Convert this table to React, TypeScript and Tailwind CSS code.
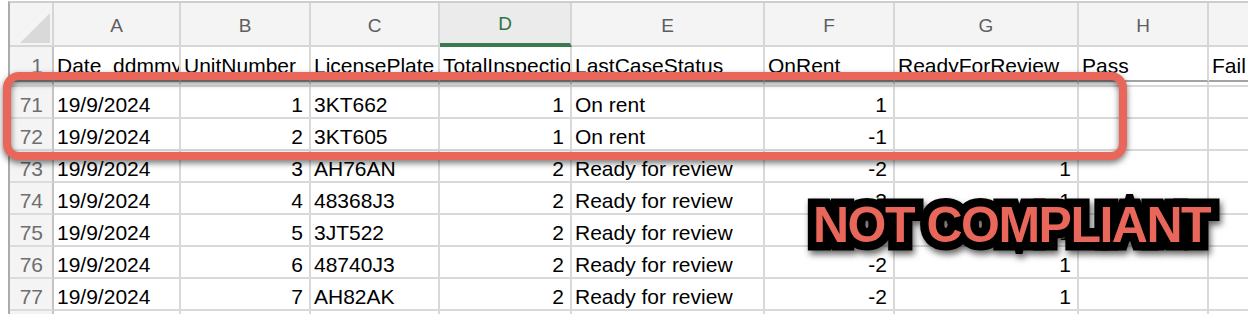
import React from 'react';

const cols = ['w-[127px]', 'w-[130px]', 'w-[129px]', 'w-[132px]', 'w-[193px]', 'w-[130px]', 'w-[184px]', 'w-[130px]', 'w-[160px]'];
const letters = ['A', 'B', 'C', 'D', 'E', 'F', 'G', 'H', ''];
const numeric = [false, true, false, true, false, true, true, true, true];

const header = ['Date_ddmmyyyy', 'UnitNumber', 'LicensePlate', 'TotalInspections', 'LastCaseStatus', 'OnRent', 'ReadyForReview', 'Pass', 'Fail'];

const rows: [number, string[]][] = [
    [71, ['19/9/2024', '1', '3KT662', '1', 'On rent', '1', '', '', '']],
    [72, ['19/9/2024', '2', '3KT605', '1', 'On rent', '-1', '', '', '']],
    [73, ['19/9/2024', '3', 'AH76AN', '2', 'Ready for review', '-2', '1', '', '']],
    [74, ['19/9/2024', '4', '48368J3', '2', 'Ready for review', '-3', '1', '', '']],
    [75, ['19/9/2024', '5', '3JT522', '2', 'Ready for review', '-2', '1', '', '']],
    [76, ['19/9/2024', '6', '48740J3', '2', 'Ready for review', '-2', '1', '', '']],
    [77, ['19/9/2024', '7', 'AH82AK', '2', 'Ready for review', '-2', '1', '', '']],
    [78, ['', '', '', '', '', '', '', '', '']],
];

function DataRow({ num, cells }: { num: number; cells: string[] }) {
    return (
        <div className="flex h-[32px]">
            <div className="w-[44px] shrink-0 flex items-end justify-end pr-[9px] pb-[1px] leading-[22px] bg-[#f4f4f4] border-r-2 border-b-2 border-r-[#c4c4c4] border-b-[#dcdcdc] text-[#6e6e6e]">
                {num}
            </div>
            {cells.map((c, i) => (
                <div
                    key={i}
                    className={`${cols[i]} shrink-0 flex items-end overflow-hidden whitespace-nowrap pb-[1px] leading-[22px] border-r-2 border-b-2 border-[#d9d9d9] ${numeric[i] ? 'justify-end pr-[6px]' : 'pl-[3px]'}`}
                >
                    {c}
                </div>
            ))}
        </div>
    );
}

export default function App() {
    return (
        <div className="relative w-[1248px] h-[314px] overflow-hidden bg-white text-[21px] text-black font-['Liberation_Sans',Arial,sans-serif]">
            <div className="h-[1px]" />
            <div className="ml-[8px] border-l-2 border-t-2 border-l-[#a7acb1] border-t-[#cdcdcd]">
                {/* Column letters */}
                <div className="flex h-[44px]">
                    <div className="w-[44px] shrink-0 relative bg-[#f4f4f4] border-r-2 border-b-2 border-[#d6d6d6]">
                        <svg className="absolute left-[10px] top-[10px]" width="30" height="30" viewBox="0 0 30 30">
                            <polygon points="30,0 30,30 0,30" fill="#d9d9d9" />
                        </svg>
                    </div>
                    {letters.map((l, i) =>
                        l === 'D' ? (
                            <div key={i} className={`${cols[i]} shrink-0 flex items-center justify-center pt-[2px] text-[19px] bg-[#ebebeb] text-[#2f7345] border-r-2 border-r-[#d6d6d6] border-b-4 border-b-[#3b7a4f]`}>
                                {l}
                            </div>
                        ) : (
                            <div key={i} className={`${cols[i]} shrink-0 flex items-center justify-center pt-[4px] text-[19px] bg-[#f4f4f4] text-[#5e5e5e] border-r-2 border-b-2 border-[#d6d6d6]`}>
                                {l}
                            </div>
                        )
                    )}
                </div>

                {/* Row 1 headers */}
                <div className="flex h-[35px]">
                    <div className="w-[44px] shrink-0 flex items-end justify-end pr-[9px] pb-[3px] leading-[22px] bg-[#f4f4f4] border-r-2 border-b-2 border-r-[#c4c4c4] border-b-[#a3a3a3] text-[#6e6e6e]">
                        1
                    </div>
                    {header.map((h, i) => (
                        <div key={i} className={`${cols[i]} shrink-0 flex items-end overflow-hidden whitespace-nowrap pl-[3px] pb-[3px] leading-[22px] border-r-2 border-r-[#d9d9d9] border-b-2 border-b-[#a3a3a3]`}>
                            {h}
                        </div>
                    ))}
                </div>

                {/* frozen pane gap */}
                <div className="flex h-[5px]">
                    <div className="w-[44px] shrink-0 bg-[#f4f4f4] border-r-2 border-b-2 border-r-[#c4c4c4] border-b-[#dcdcdc]" />
                    {cols.map((c, i) => (
                        <div key={i} className={`${c} shrink-0 border-r-2 border-b-2 border-[#d9d9d9]`} />
                    ))}
                </div>

                {rows.map(([n, cells]) => (
                    <DataRow key={n} num={n} cells={cells} />
                ))}
            </div>

            {/* Callout box */}
            <div className="absolute left-[3px] top-[72px] w-[1124px] h-[88px] rounded-[16px] border-[8px] border-[#e9675a] drop-shadow-[0_3px_3px_rgba(0,0,0,0.55)]" />

            {/* Stamp */}
            <div className="absolute left-[813px] top-[200px] text-[50px] leading-none font-bold tracking-[-1.5px] whitespace-nowrap text-[#e9675a] [-webkit-text-stroke:17px_#000] [paint-order:stroke_fill] [text-shadow:0_0_2px_#000] drop-shadow-[2px_4px_3px_rgba(0,0,0,0.6)]">
                NOT COMPLIANT
            </div>
        </div>
    );
}
